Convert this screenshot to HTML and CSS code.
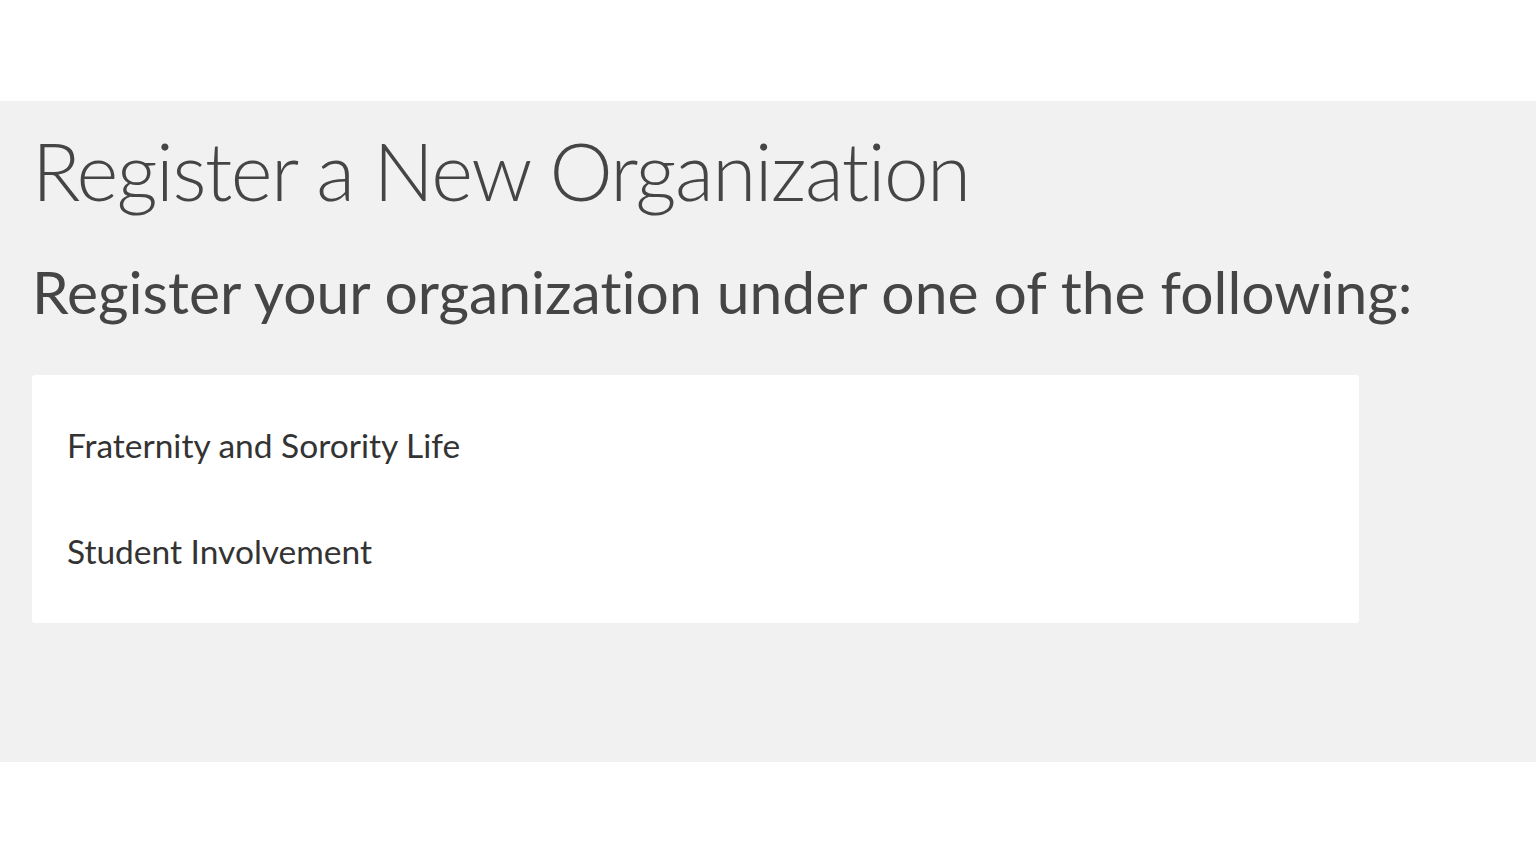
FILE: index.html
```html
<!DOCTYPE html>
<html lang="en">
<head>
<meta charset="utf-8">
<title>Register a New Organization</title>
<link rel="stylesheet" href="styles.css">
</head>
<body>
<div class="topbar"></div>
<main class="panel">
  <h1 class="title">Register a New Organization</h1>
  <h2 class="subtitle">Register your organization under one of the following:</h2>
  <div class="card">
    <a class="item" href="#">Fraternity and Sorority Life</a>
    <a class="item" href="#">Student Involvement</a>
  </div>
</main>
</body>
</html>
```
FILE: styles.css
```css
html, body {
  margin: 0;
  padding: 0;
  background: #ffffff;
  font-family: Lato, "Open Sans", "Liberation Sans", sans-serif;
  font-variant-ligatures: none;
}
.topbar {
  height: 101px;
  background: #ffffff;
}
.panel {
  background: #f1f1f1;
  height: 661px;
  padding: 0 0 0 32px;
  box-sizing: border-box;
  display: flex;
  flex-direction: column;
  align-items: flex-start;
}
.title {
  margin: 19px 0 0 0;
  font-weight: 300;
  font-size: 80px;
  line-height: 100px;
  color: #454545;
  letter-spacing: -1.5px;
}
.subtitle {
  margin: 36px 0 0 0;
  font-weight: 400;
  font-size: 58.75px;
  line-height: 72px;
  color: #454545;
}
.card {
  margin-top: 47px;
  width: 1327px;
  height: 248px;
  background: #ffffff;
  border-radius: 3px;
  box-sizing: border-box;
  padding: 52px 0 0 35px;
  display: flex;
  flex-direction: column;
  gap: 70px;
}
.item {
  font-size: 33.5px;
  line-height: 36px;
  color: #333333;
  text-decoration: none;
}
```
